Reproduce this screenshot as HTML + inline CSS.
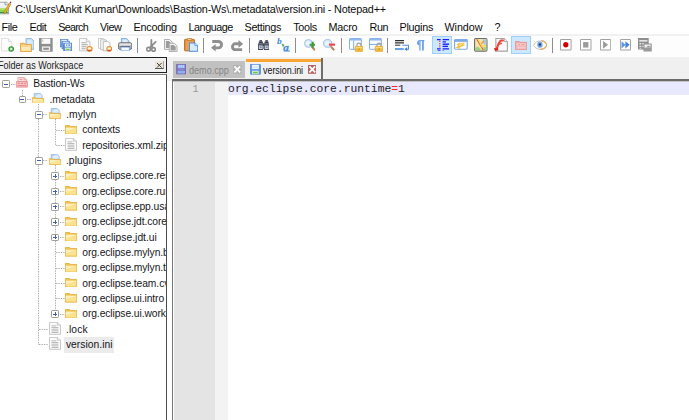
<!DOCTYPE html><html><head><meta charset="utf-8"><title>Notepad++</title><style>
*{margin:0;padding:0;box-sizing:border-box}
html,body{width:689px;height:420px;overflow:hidden;background:#fff}
body{position:relative;font-family:"Liberation Sans",sans-serif;font-size:10.4px;color:#000}
.abs{position:absolute}
.t{position:absolute;white-space:nowrap;line-height:14px;height:14px}
.ui{font-size:10.8px;color:#0c0c0c}
#topgray{left:0;top:34px;width:689px;height:2px;background:#f1f1f1}
#toolbar{left:0;top:36px;width:689px;height:20.5px;background:#fdfdfd}
.sep{position:absolute;top:37.5px;width:1.2px;height:15.2px;background:#8d8d8d}
.hot{position:absolute;top:36.2px;height:17.4px;background:#cce8ff;border:1px solid #9fd0fb}
#below{left:0;top:56.5px;width:689px;height:24px;background:#f0f0f0}
#phead{left:-3px;top:57.1px;width:170.3px;height:15.6px;border:1.4px solid #202020;background:#f0f0f0}
#ptitle{font-size:10.2px;color:#1e1e1e}
#pclose{left:155px;top:60.8px;width:9px;height:8.4px;background:#ece5da;border-right:1px solid #a8a39a;border-bottom:1px solid #5a5a5a}
#tree{left:-2px;top:74.2px;width:169.2px;height:350px;border:1px solid #808080;border-right:1.15px solid #4c4c4c;background:#fff;overflow:hidden}
#treeclip{left:0;top:75px;width:165.6px;height:345px;overflow:hidden}
.row{position:absolute;white-space:nowrap;height:14px;line-height:14px;font-size:10.3px;color:#16161c}
.dv{position:absolute;width:1px;background-image:linear-gradient(#a4a4a4 50%,rgba(255,255,255,0) 50%);background-size:1px 1.7px}
.dh{position:absolute;height:1px;background-image:linear-gradient(90deg,#a4a4a4 50%,rgba(255,255,255,0) 50%);background-size:1.7px 1px}
.exp{position:absolute;width:7.6px;height:7.6px;border:1px solid #9d9d9d;background:#fff;border-radius:1.2px}
.exp i{position:absolute;left:.8px;top:2.3px;width:4px;height:1px;background:#3f5cc0}
.exp b{position:absolute;left:2.3px;top:.8px;width:1px;height:4px;background:#3f5cc0}
#sel{left:64.5px;top:337.2px;width:49.5px;height:15.2px;background:#ececec}
#tab1{left:173.3px;top:60.9px;width:71.6px;height:17px;background:#c1c1c1}
#tab2{left:246.2px;top:59px;width:75.2px;height:20.4px;background:#f1f1f1}
#tab2r{left:321.2px;top:58.2px;width:1.5px;height:21.2px;background:#6e6e6e}
#tab2top{left:246.2px;top:58.9px;width:75px;height:3.1px;background:#faa635}
.tabt{font-size:10.2px}
.cl{position:absolute;width:8.6px;height:8.8px}
#edborder{left:172.3px;top:79.3px;width:517px;height:1.5px;background:#6a6a6a}
#edborder2{left:173.3px;top:80.7px;width:516px;height:.5px;background:#c4c4c4}
#edleft{left:172.3px;top:79.4px;width:1.2px;height:341px;background:#747474}
#lnm{left:173.5px;top:81px;width:41.1px;height:339px;background:#e4e4e4}
#fold{left:214.6px;top:81px;width:13.4px;height:339px;background:#f3f3f3}
#hl{left:228px;top:81.3px;width:461px;height:13.6px;background:#e8e8ff}
.mono{font-family:"Liberation Mono",monospace;font-size:11.33px;line-height:14px}
#ln{color:#9a9a9a;font-size:10px}
#code{color:#1c1c1c}
#code span{color:#ff2020}
</style></head><body>
<svg class="abs" style="left:0.00px;top:0.00px" width="12.00" height="15.00" viewBox="0 0 12 15"><path d="M0 2.200h6.800l1.800 1.800v10h-8.600z" fill="#f4f7fa"/><path d="M0 2.200h6.800l1.800 1.800v10" fill="none" stroke="#7c7c7c" stroke-width=".700"/><path d="M5 2.200v2.800h3.200" fill="#e4e4e4" stroke="#6a6a6a" stroke-width=".600"/><path d="M0 5.400h7.600v2h-7.600z" fill="#e8f0f8"/><path d="M0 7.800h7.800v.600h-7.800z" fill="#ecd9a8"/><path d="M0 8.400h7.800v3.600h-7.800z" fill="#8fd648"/><path d="M0 8.400h7.800v1.400h-7.800z" fill="#b4e478"/><path d="M0 12h7.800v1.300h-7.800z" fill="#2f9a3f"/><path d="M0 13.400h8.600v.900h-8.600z" fill="#9a9a9a"/><path d="M9.300 3.400l1.500.900-5 8.400-2 .900.300-2z" fill="#f5b51e" stroke="#8a5a18" stroke-width=".400"/><path d="M9.500 2.800l.900-1.300 1 .600-.600 1.500z" fill="#8a1a2a"/></svg>
<div class="t ui" id="title" style="left:15.20px;top:1.60px;letter-spacing:-0.178px;">C:\Users\Ankit Kumar\Downloads\Bastion-Ws\.metadata\version.ini - Notepad++</div>
<div class="t ui" id="m0" style="left:1.50px;top:19.60px;letter-spacing:-0.377px;">File</div>
<div class="t ui" id="m1" style="left:29.50px;top:19.60px;letter-spacing:-0.427px;">Edit</div>
<div class="t ui" id="m2" style="left:58.20px;top:19.60px;letter-spacing:-0.753px;">Search</div>
<div class="t ui" id="m3" style="left:100.00px;top:19.60px;letter-spacing:-0.455px;">View</div>
<div class="t ui" id="m4" style="left:133.50px;top:19.60px;letter-spacing:-0.204px;">Encoding</div>
<div class="t ui" id="m5" style="left:188.50px;top:19.60px;letter-spacing:-0.456px;">Language</div>
<div class="t ui" id="m6" style="left:244.50px;top:19.60px;letter-spacing:-0.302px;">Settings</div>
<div class="t ui" id="m7" style="left:293.20px;top:19.60px;letter-spacing:-0.304px;">Tools</div>
<div class="t ui" id="m8" style="left:328.50px;top:19.60px;letter-spacing:-0.220px;">Macro</div>
<div class="t ui" id="m9" style="left:369.50px;top:19.60px;letter-spacing:-0.404px;">Run</div>
<div class="t ui" id="m10" style="left:399.50px;top:19.60px;letter-spacing:-0.260px;">Plugins</div>
<div class="t ui" id="m11" style="left:444.50px;top:19.60px;letter-spacing:-0.084px;">Window</div>
<div class="t ui" id="m12" style="left:494.50px;top:19.60px;letter-spacing:-0.616px;">?</div>
<div class="abs" id="topgray"></div><div class="abs" id="toolbar"></div><div class="abs" id="below"></div>
<div class="hot" style="left:432.2px;width:19.8px"></div><div class="hot" style="left:511px;width:19.7px"></div>
<div class="sep" style="left:136.7px"></div>
<div class="sep" style="left:202.5px"></div>
<div class="sep" style="left:248.8px"></div>
<div class="sep" style="left:294.9px"></div>
<div class="sep" style="left:341.0px"></div>
<div class="sep" style="left:387.3px"></div>
<div class="sep" style="left:551.8px"></div>
<svg class="abs" style="left:1.00px;top:38.20px" width="13.00" height="13.70" viewBox="1.50 1.00 13.90 14.90" preserveAspectRatio="none"><path d="M2 1.500h7.500l3.500 3.500v10h-11z" fill="#fdfdfd" stroke="#dcdcdc"/><path d="M9.500 1.500v3.500h3.500" fill="#f4f4f4" stroke="#dcdcdc"/><circle cx="12.400" cy="12.900" r="3" fill="#2f8f2f"/><circle cx="12.400" cy="12.900" r="2.100" fill="#58b558"/><path d="M11.500 11.300l2.600 1.600-2.600 1.600z" fill="#fff"/></svg>
<svg class="abs" style="left:19.60px;top:38.00px" width="14.40" height="14.00" viewBox="0.30 0.30 16.00 15.70" preserveAspectRatio="none"><path d="M7 .800h6l2.800 2.800v9.400h-8.800z" fill="#c3dcf8" stroke="#8ab6ec"/><path d="M8.500 2.500h4l1.800 1.800v6.500h-5.800z" fill="#dcebfc"/><path d="M.800 6.200h4.500l1.200 1.300h6.500v8h-12.200z" fill="#f6c46a" stroke="#e8a03a"/><path d="M1.700 8.700h10.400v6h-10.400z" fill="#fdeab2"/><path d="M1.700 8.700h10.400v1.600h-10.400z" fill="#fbd88a"/></svg>
<svg class="abs" style="left:39.40px;top:38.20px" width="13.70" height="13.70" viewBox="1.00 1.00 14.00 14.00" preserveAspectRatio="none"><path d="M1 1h14v14h-12.5l-1.5-1.5z" fill="#8e8e8e"/><rect x="3.6" y="1.6" width="9" height="5.4" fill="#fafafa"/><rect x="4.2" y="2.6" width="1.2" height="2.4" fill="#c8c8c8"/><rect x="4" y="9.6" width="8.4" height="4.6" fill="#ededed"/><rect x="5.4" y="11" width="5.6" height="2" fill="#8e8e8e"/></svg>
<svg class="abs" style="left:60.00px;top:39.00px" width="12.20" height="12.20" viewBox="0.60 1.10 14.40 14.50" preserveAspectRatio="none"><rect x="1" y="1.500" width="9" height="9" fill="#7aa6e2" stroke="#5585cc" stroke-width=".800"/><rect x="2.400" y="2.200" width="6.400" height="3" fill="#eef5fd"/><rect x="3" y="3.800" width="9" height="9" fill="#7aa6e2" stroke="#5585cc" stroke-width=".800"/><rect x="4.400" y="4.500" width="6.400" height="3" fill="#eef5fd"/><rect x="5" y="6" width="9.600" height="9.200" fill="#6496dc" stroke="#467ac8" stroke-width=".800"/><rect x="6.400" y="6.600" width="7" height="3.600" fill="#f6faff"/><rect x="8" y="7.400" width="1.200" height="2" fill="#467ac8"/><rect x="10.600" y="7.400" width="1.600" height="2" fill="#467ac8"/><rect x="6.800" y="11.400" width="6.200" height="3.400" fill="#eef9e4"/><rect x="7.800" y="12.600" width="4.200" height="1.600" fill="#7cc64c"/></svg>
<svg class="abs" style="left:79.00px;top:38.20px" width="13.60" height="13.70" viewBox="2.00 1.00 13.70 14.70" preserveAspectRatio="none"><path d="M2.500 1.500h7l3.500 3.500v9.800h-10.500z" fill="#fbfbfb" stroke="#c6c6c6"/><path d="M9.500 1.500v3.500h3.500" fill="#f0f0f0" stroke="#c6c6c6"/><path d="M4.500 6h5M4.500 8.200h6.500M4.500 10.400h5M4.500 12.600h4" stroke="#a8a8a8" stroke-width="1.100"/><circle cx="12.600" cy="12.600" r="3.100" fill="#dd7d2a"/><circle cx="12.600" cy="12.200" r="2.200" fill="#f9cc78"/><rect x="11" y="11.600" width="3.200" height="1.400" rx=".500" fill="#fdf2dc"/><path d="M10.400 14.200a3.100 3.100 0 0 0 4.400 0z" fill="#e03a1e"/></svg>
<svg class="abs" style="left:98.20px;top:38.20px" width="14.00" height="13.70" viewBox="0.50 0.50 15.50 15.20" preserveAspectRatio="none"><path d="M1 1h5.500l2 2v9h-7.500z" fill="#fbfbfb" stroke="#c4c4c4"/><path d="M3.500 2.500h5.500l2 2v9h-7.500z" fill="#fbfbfb" stroke="#bcbcbc"/><path d="M6.300 4.200h5l2.500 2.500v8.100h-7.500z" fill="#fcfcfc" stroke="#b4b4b4"/><circle cx="12.900" cy="12.600" r="3.100" fill="#dd7d2a"/><circle cx="12.900" cy="12.200" r="2.200" fill="#f9cc78"/><rect x="11.300" y="11.600" width="3.200" height="1.400" rx=".500" fill="#fdf2dc"/><path d="M10.700 14.200a3.100 3.100 0 0 0 4.400 0z" fill="#e03a1e"/></svg>
<svg class="abs" style="left:118.00px;top:38.20px" width="14.30" height="13.20" viewBox="0.30 0.50 15.60 14.90" preserveAspectRatio="none"><path d="M4 1h5.600l2.600 2.600v3.400h-8.200z" fill="#b9d6f7" stroke="#74aaea"/><path d="M5.400 2.400h3.800l1.600 1.600v2.600h-5.400z" fill="#e2eefc"/><rect x=".800" y="5.800" width="14.600" height="7.600" rx="1.800" fill="#b2b2b2" stroke="#6c6c6c"/><rect x="1.600" y="6.600" width="13" height="2.400" rx="1.200" fill="#e4e4e4"/><rect x="1.600" y="10.800" width="13" height="1.800" fill="#9c9c9c"/><rect x="3" y="9.600" width="10.200" height="1.200" fill="#5e5e5e"/><rect x="3.600" y="10.800" width="9" height="4.200" fill="#f4f8ff" stroke="#6fa5e8" stroke-width=".800"/></svg>
<svg class="abs" style="left:146.20px;top:38.60px" width="10.50" height="13.00" viewBox="1.70 0.10 13.00 15.90" preserveAspectRatio="none"><path d="M8.400 1.200l-.200 8M13.600 3.600l-6.400 6.400" stroke="#8c8c8c" stroke-width="2.200" fill="none" stroke-linecap="round"/><circle cx="4.900" cy="12.600" r="2.200" fill="none" stroke="#8c8c8c" stroke-width="2"/><circle cx="11" cy="12.800" r="2.200" fill="none" stroke="#8c8c8c" stroke-width="2"/><path d="M6.300 11l2.600-2.400 1.300 2.800" stroke="#8c8c8c" stroke-width="2" fill="none"/></svg>
<svg class="abs" style="left:164.40px;top:38.80px" width="13.50" height="13.10" viewBox="0.45 0.65 15.60 14.90" preserveAspectRatio="none"><path d="M1 1.2h6l3 3v8.3h-9z" fill="#f6f6f6" stroke="#a9a9a9" stroke-width="1.1"/><path d="M2.6 3h3.6l2.2 2.2v5.6h-5.8z" fill="#9b9b9b"/><path d="M6.5 5.6h6l3 3v6.4h-9z" fill="#f6f6f6" stroke="#a9a9a9" stroke-width="1.1"/><path d="M8 7.4h3.8l2.2 2.2v4h-6z" fill="#9b9b9b"/></svg>
<svg class="abs" style="left:184.00px;top:38.20px" width="14.20" height="13.70" viewBox="0.50 0.45 15.55 15.50" preserveAspectRatio="none"><rect x="1" y="2" width="11" height="13" rx="1" fill="#d98a3a" stroke="#b86a20"/><rect x="2.4" y="3.4" width="8.2" height="10.4" fill="#e9a254"/><rect x="4" y=".8" width="5" height="2.6" rx=".8" fill="#f3c98a" stroke="#b86a20" stroke-width=".7"/><path d="M6.5 6h6l3 3v6.4h-9z" fill="#d9eafd" stroke="#4f8fe0" stroke-width="1.1"/><path d="M12.5 6v3h3" fill="#eef6ff" stroke="#4f8fe0" stroke-width=".9"/></svg>
<svg class="abs" style="left:211.30px;top:40.30px" width="12.00" height="11.60" viewBox="0.80 2.10 15.60 14.90" preserveAspectRatio="none"><path d="M2.400 4h8a4.100 4.100 0 0 1 0 8.200h-4.400" fill="none" stroke="#8f8f8f" stroke-width="3.800"/><path d="M.800 12.200l6-4.800v9.600z" fill="#8f8f8f"/></svg>
<svg class="abs" style="left:231.10px;top:39.70px" width="12.10" height="11.30" viewBox="-0.10 1.40 15.90 14.10" preserveAspectRatio="none"><path d="M13 6.200h-7.500a3.700 3.700 0 0 0 0 7.400h9" fill="none" stroke="#8f8f8f" stroke-width="3.800"/><path d="M15.800 6.200l-6-4.800v9.600z" fill="#8f8f8f"/></svg>
<svg class="abs" style="left:257.80px;top:40.30px" width="11.40" height="10.20" viewBox="1.20 2.40 13.60 12.00" preserveAspectRatio="none"><path d="M3 2.400h3v2h-3zM10 2.400h3v2h-3z" fill="#50556a"/><path d="M2.200 4.200h4.800v2.400h-4.800zM9 4.200h4.800v2.400h-4.800z" fill="#3c404d"/><path d="M1.200 6.400h6.600v8h-6.600zM8.200 6.400h6.600v8h-6.600z" fill="#444857"/><rect x="6.800" y="6.400" width="2.400" height="3" fill="#3c404d"/><rect x="2.200" y="8.800" width="4.600" height="4.200" fill="#c2ccdc"/><rect x="9.200" y="8.800" width="4.600" height="4.200" fill="#c2ccdc"/><rect x="3.400" y="10" width="2.200" height="1.800" fill="#7a869c"/><rect x="10.400" y="10" width="2.200" height="1.800" fill="#7a869c"/><path d="M1.200 6.400h6.600v1.400h-6.600zM8.200 6.400h6.600v1.400h-6.600z" fill="#6a7084"/></svg>
<svg class="abs" style="left:276.60px;top:38.40px" width="13.90" height="13.50" viewBox="0.10 0.30 15.50 15.40" preserveAspectRatio="none"><text x="0" y="7.600" font-family="Liberation Serif,serif" font-weight="bold" font-style="italic" font-size="10.500" fill="#3d8ae6">b</text><text x="7" y="15.400" font-family="Liberation Serif,serif" font-weight="bold" font-style="italic" font-size="12.500" fill="#3d8ae6" stroke="#3d8ae6" stroke-width=".300">a</text><path d="M5 6.600l3.400 1.400-1.400 3z" fill="#4cab3c"/><path d="M7.400 14.600h8.200v1h-8.200z" fill="#5a9cea"/></svg>
<svg class="abs" style="left:303.70px;top:39.00px" width="11.80" height="11.60" viewBox="-0.25 0.15 16.05 15.85" preserveAspectRatio="none"><circle cx="5.800" cy="6.200" r="5.400" fill="#d6e6f9" stroke="#a2c2ea" stroke-width="1.300"/><circle cx="5.400" cy="5.800" r="3" fill="#ecf4fd"/><path d="M10.800 11.200l3 3.400" stroke="#b88452" stroke-width="2.800" stroke-linecap="round"/><path d="M7.400 6.600h2.800v-2.800h2.800v2.800h2.800v2.800h-2.800v2.800h-2.800v-2.800h-2.800z" fill="#3f9a3a"/></svg>
<svg class="abs" style="left:322.90px;top:39.00px" width="12.30" height="11.60" viewBox="-0.25 0.15 16.25 15.85" preserveAspectRatio="none"><circle cx="5.800" cy="6.200" r="5.400" fill="#d6e6f9" stroke="#a2c2ea" stroke-width="1.300"/><circle cx="5.400" cy="5.800" r="3" fill="#ecf4fd"/><path d="M10.800 11.200l3 3.400" stroke="#b88452" stroke-width="2.800" stroke-linecap="round"/><rect x="7.600" y="6.200" width="8.400" height="3.200" rx=".600" fill="#ee4a4a"/></svg>
<svg class="abs" style="left:349.00px;top:38.40px" width="14.00" height="13.70" viewBox="0.25 0.45 16.10 15.70" preserveAspectRatio="none"><rect x=".800" y="1" width="13.600" height="12.400" rx="1" fill="#fdfeff" stroke="#79a8e8" stroke-width="1.100"/><rect x=".800" y="1" width="13.600" height="2.400" fill="#8fb8ef"/><path d="M5.600 3.400v9.800" stroke="#79a8e8" stroke-width="1.100"/><path d="M9.400 10.400v-1.600a2.300 2.300 0 0 1 4.600 0v1.600" fill="none" stroke="#a8a8a8" stroke-width="1.500"/><rect x="7.400" y="10" width="8.600" height="5.800" rx=".600" fill="#f1bb3c" stroke="#dfa024" stroke-width=".700"/><rect x="8.200" y="10.700" width="7" height="1.500" fill="#f9d97c"/><rect x="11.200" y="12.400" width="1.200" height="2" fill="#c88a1a"/></svg>
<svg class="abs" style="left:368.90px;top:38.40px" width="14.00" height="13.70" viewBox="0.25 0.45 16.10 15.70" preserveAspectRatio="none"><rect x=".800" y="1" width="13.600" height="12.400" rx="1" fill="#fdfeff" stroke="#79a8e8" stroke-width="1.100"/><rect x=".800" y="1" width="13.600" height="2.400" fill="#8fb8ef"/><path d="M1 7.800h13.200" stroke="#79a8e8" stroke-width="1.100"/><path d="M9.400 10.400v-1.600a2.300 2.300 0 0 1 4.600 0v1.600" fill="none" stroke="#a8a8a8" stroke-width="1.500"/><rect x="7.400" y="10" width="8.600" height="5.800" rx=".600" fill="#f1bb3c" stroke="#dfa024" stroke-width=".700"/><rect x="8.200" y="10.700" width="7" height="1.500" fill="#f9d97c"/><rect x="11.200" y="12.400" width="1.200" height="2" fill="#c88a1a"/></svg>
<svg class="abs" style="left:395.00px;top:39.90px" width="14.30" height="11.10" viewBox="0.60 2.20 15.30 14.00" preserveAspectRatio="none"><path d="M.6 3h9.6M.6 5.8h9.6" stroke="#2e2e2e" stroke-width="1.6"/><path d="M.6 8.8h5.6" stroke="#5a5a5a" stroke-width="1.6"/><path d="M8.6 8.8h6.6v5h-2.4" fill="none" stroke="#4a8ee6" stroke-width="1.4"/><path d="M13.6 11.4l-3 2.4 3 2.4z" fill="#3a7ad6"/><path d="M.6 13.6h9.4" stroke="#6aa2ec" stroke-width="2.6"/></svg>
<svg class="abs" style="left:417.20px;top:40.00px" width="7.40" height="10.50" viewBox="3.80 0.85 9.20 14.35" preserveAspectRatio="none"><path d="M5.600 1.600h7.400" stroke="#6aa2ec" stroke-width="1.500"/><path d="M7.200 1.600a3.400 3.400 0 0 0 0 6.800z" fill="#6aa2ec"/><path d="M7.400 1.600v13.600" stroke="#86b4f2" stroke-width="2"/><path d="M11.200 1.600v13.600" stroke="#5a94e6" stroke-width="2"/></svg>
<svg class="abs" style="left:436.70px;top:39.00px" width="12.60" height="12.40" viewBox="1.00 0.85 15.20 15.20" preserveAspectRatio="none"><path d="M1 1.6h4.4M7.8 1.6h8" stroke="#1a1aff" stroke-width="1.5"/><path d="M7.8 4.4h4" stroke="#1a1aff" stroke-width="1.5"/><path d="M7.8 7.2h8.4" stroke="#1a1aff" stroke-width="1.7"/><path d="M7.8 9.9h6.4" stroke="#1a1aff" stroke-width="1.7"/><path d="M1 13h4.4M7.8 13h8" stroke="#1a1aff" stroke-width="1.5"/><path d="M1.8 15.4h3.4M7.8 15.4h1.2" stroke="#2a2aee" stroke-width="1.3"/><path d="M4.4 3v9" stroke="#e82020" stroke-width="1.3" stroke-dasharray="1.6 1.2"/></svg>
<svg class="abs" style="left:454.10px;top:39.20px" width="13.80" height="11.30" viewBox="0.15 0.55 15.90 14.65" preserveAspectRatio="none"><rect x=".800" y="1.200" width="14.600" height="12.600" rx="1.200" fill="#fdfeff" stroke="#7ea8e6" stroke-width="1.300"/><rect x=".800" y="1.200" width="14.600" height="3" fill="#7ea8e6"/><path d="M5.600 5.600l7.400-.400-2.200 2.600 2.800.400-6 2.600-2.200 4.400-.600-3.200-3.600.600 3.800-3.400-1.800-1.400z" fill="#f2c040"/><path d="M6.600 6.400l4.400-.200-2 2.200-3.400 2.200z" fill="#f9dc86"/></svg>
<svg class="abs" style="left:474.20px;top:38.20px" width="13.50" height="13.70" viewBox="0.15 0.15 15.90 15.90" preserveAspectRatio="none"><rect x=".800" y=".800" width="14.600" height="14.600" rx="1.400" fill="#f3e3a4" stroke="#6d6d6d" stroke-width="1.300"/><path d="M10 1.600h4.800v5.800l-2.800 1z" fill="#a6cbe8"/><path d="M1.600 11.400l3.400-1.200 2.600 2.400.800 2.200h-6.800z" fill="#9ad284"/><path d="M11.400 10.400l3.400 1v3.400h-3.600z" fill="#9ad284"/><path d="M3.400 1.600l4 6.400 3.600 6" fill="none" stroke="#e8553a" stroke-width="1.400"/><path d="M7.600 8.200l4.400-4.800" fill="none" stroke="#ee8a3a" stroke-width="1.200"/><path d="M5 1.600l4.600 8.800 4.600-2" fill="none" stroke="#f9dc5a" stroke-width="1.300"/></svg>
<svg class="abs" style="left:493.70px;top:38.20px" width="13.90" height="13.70" viewBox="0.40 0.60 15.00 15.20" preserveAspectRatio="none"><path d="M2.400 1.200h9l3.400 3.400v10.600h-12.400z" fill="#fdfdfd" stroke="#a4a4a4" stroke-width="1.200"/><path d="M11.400 1.200v3.400h3.400" fill="#f1f1f1" stroke="#a4a4a4"/><path d="M10 3.400c-2-.600-3.200.400-4 2.400l-2.800 6.800" fill="none" stroke="#f04a44" stroke-width="2.400" stroke-linecap="round"/><path d="M.400 12l4-.800.800 2.800-3.600 1.200z" fill="#e8281e"/><path d="M4 7.800l5-1.200" stroke="#f04a44" stroke-width="1.600"/></svg>
<svg class="abs" style="left:515.00px;top:41.00px" width="12.20" height="9.10" viewBox="0.50 3.10 15.20 12.20" preserveAspectRatio="none"><path d="M1 3.600h4.600l1.200 1.300h8.400v9.900h-14.200z" fill="#f2a8a8" stroke="#e88c8c" stroke-width="1"/><path d="M2.400 6.400h11.400v2.600h-11.400z" fill="#fadcdc"/><path d="M2.400 10.400h11.400v3h-11.400z" fill="#f7caca"/><path d="M4 7h3v1.400h-3zM8.400 7h4.200v1.400h-4.200z" fill="#f0a2a2"/></svg>
<svg class="abs" style="left:532.90px;top:40.00px" width="14.50" height="10.00" viewBox="0.05 3.40 16.20 9.45" preserveAspectRatio="none"><path d="M.600 8.400c3-5.200 11.600-5.800 15 0-3.400 5-12 5-15 0z" fill="#fdfdfd" stroke="#bdbdbd" stroke-width=".900"/><path d="M9.400 4c3 .200 5.200 1.800 6.200 4.400-1.400 2.600-4.400 4-7.600 3.800" fill="none" stroke="#e9a860" stroke-width="1.200"/><circle cx="7.800" cy="7.800" r="3" fill="#84aee2"/><circle cx="7.800" cy="7.800" r="1.900" fill="#5a88c8"/><circle cx="7.800" cy="7.600" r=".900" fill="#222840"/></svg>
<svg class="abs" style="left:560.20px;top:39.00px" width="11.60" height="11.50" viewBox="0.55 1.15 14.90 14.30" preserveAspectRatio="none"><rect x="1.200" y="1.800" width="13.600" height="13" rx=".8" fill="#fff" stroke="#a2a2a2" stroke-width="1.300"/><circle cx="8" cy="8.400" r="3.400" fill="#d40000"/></svg>
<svg class="abs" style="left:580.10px;top:39.00px" width="11.50" height="11.50" viewBox="0.55 1.15 14.90 14.30" preserveAspectRatio="none"><rect x="1.200" y="1.800" width="13.600" height="13" rx=".8" fill="#fff" stroke="#a2a2a2" stroke-width="1.300"/><rect x="4.600" y="5" width="6.800" height="6.800" fill="#9b9b9b"/></svg>
<svg class="abs" style="left:599.70px;top:39.00px" width="11.20" height="11.50" viewBox="0.55 1.15 14.90 14.30" preserveAspectRatio="none"><rect x="1.200" y="1.800" width="13.600" height="13" rx=".8" fill="#fff" stroke="#a2a2a2" stroke-width="1.300"/><path d="M4.600 3.600l6.800 4.800-6.800 4.800z" fill="#9b9b9b"/></svg>
<svg class="abs" style="left:619.90px;top:39.00px" width="11.00" height="11.50" viewBox="0.55 1.15 14.90 14.30" preserveAspectRatio="none"><rect x="1.200" y="1.800" width="13.600" height="13" rx=".8" fill="#fff" stroke="#a2a2a2" stroke-width="1.300"/><path d="M2.600 3.800l5.600 4.600-5.600 4.600z" fill="#5e98ea"/><path d="M7.800 3.800l5.800 4.600-5.800 4.600z" fill="#3f82e0"/></svg>
<svg class="abs" style="left:638.30px;top:38.40px" width="13.80" height="13.50" viewBox="0.60 0.60 15.20 15.20" preserveAspectRatio="none"><rect x=".6" y=".6" width="11.800" height="13" fill="#8e8e8e"/><rect x="2" y="3" width="9" height="1.600" fill="#f2f2f2"/><path d="M2.200 6.200h2v1.800h-2zM5.400 6.200h2v1.800h-2zM2.200 9.200h2v1.800h-2zM5.400 9.200h2v1.800h-2zM2.200 12h2v1.200h-2z" fill="#e4e4e4"/><rect x="6.600" y="6.800" width="9.200" height="9" fill="#9a9a9a"/><rect x="7.800" y="8" width="6.800" height="3.400" fill="#f0f0f0"/><path d="M9.400 11.400l2.400-2.400 1.600 1.200 1.200-.8v2z" fill="#9a9a9a"/></svg>
<div class="abs" id="phead"></div>
<div class="t" id="ptitle" style="left:-1.80px;top:59.00px;transform:scaleX(0.8868);transform-origin:0 0;">Folder as Workspace</div>
<div class="abs" id="pclose"></div>
<svg class="abs" style="left:156.20px;top:61.50px" width="6.60" height="6.60" viewBox="0 0 6.600 6.600"><path d="M1 1l4.600 4.600M5.600 1l-4.600 4.600" stroke="#3a3a3a" stroke-width="1"/></svg>
<div class="abs" id="tree"></div><div class="abs" id="treeclip">
<div class="abs" style="left:63.9px;top:262.2px;width:50.2px;height:15.5px;background:#ebebeb"></div>
<div class="dv" style="left:21.95px;top:14.70px;height:5.83px"></div>
<div class="dv" style="left:38.30px;top:29.03px;height:240.78px"></div>
<div class="dv" style="left:54.65px;top:44.36px;height:26.16px"></div>
<div class="dv" style="left:54.65px;top:90.35px;height:144.80px"></div>
<div class="dh" style="left:10.60px;top:8.70px;width:5.00px"></div>
<div class="exp" style="left:2.30px;top:5.40px"><i></i></div>
<svg class="abs" style="left:16.00px;top:2.20px" width="11.80" height="10.50" viewBox="0.55 0.35 14.90 14.70" preserveAspectRatio="none"><path d="M3 .8h7.600l3.400 3.400v3h-11z" fill="#fbe4e4" stroke="#e58a8a" stroke-width=".9"/><path d="M10.600.8v3.400h3.400" fill="#f7d0d0" stroke="#e58a8a" stroke-width=".8"/><path d="M5 3h3.400v1.600h-3.400z" fill="#e99a9a"/><path d="M1 6.600h14v8h-14z" fill="#f6c4c4" stroke="#e27f7f" stroke-width=".9"/><path d="M2.600 8.400h3v1.600h-3zM6.800 8.400h3v1.600h-3zM11 8.400h2.600v1.600h-2.600zM2.600 11.400h11v1.800h-11z" fill="#e68c8c"/></svg>
<div class="row" id="r0" style="left:33.20px;top:2.30px;letter-spacing:-0.126px;">Bastion-Ws</div>
<div class="dh" style="left:26.95px;top:24.03px;width:5.00px"></div>
<div class="exp" style="left:18.65px;top:20.73px"><i></i></div>
<svg class="abs" style="left:32.35px;top:17.53px" width="12.00" height="10.80" viewBox="0.75 0.35 14.70 14.70" preserveAspectRatio="none"><path d="M3.400.800h7l2.800 2.800v5h-9.800z" fill="#b9d6f6" stroke="#86b4ea" stroke-width=".900"/><path d="M4.600 6.400c.600-3 3-4.600 6.200-4.400l1.600 1.800v2.600z" fill="#e4effc"/><path d="M1.200 6.600h3.600l1 1.200h9.200v6.800h-13.800z" fill="#f4c85c" stroke="#e6ac3c" stroke-width=".900"/><path d="M1.800 8.800h12.600v5.200h-12.600z" fill="#fce596"/><path d="M1.800 8.800h12.600l-12.600 2.800z" fill="#fdf2c8"/></svg>
<div class="row" id="r1" style="left:49.55px;top:17.63px;letter-spacing:-0.066px;">.metadata</div>
<div class="dh" style="left:43.30px;top:39.36px;width:5.00px"></div>
<div class="exp" style="left:35.00px;top:36.06px"><i></i></div>
<svg class="abs" style="left:48.70px;top:32.86px" width="12.00" height="10.80" viewBox="0.75 0.35 14.70 14.70" preserveAspectRatio="none"><path d="M3.400.800h7l2.800 2.800v5h-9.800z" fill="#b9d6f6" stroke="#86b4ea" stroke-width=".900"/><path d="M4.600 6.400c.600-3 3-4.600 6.200-4.400l1.600 1.800v2.600z" fill="#e4effc"/><path d="M1.200 6.600h3.600l1 1.200h9.200v6.800h-13.800z" fill="#f4c85c" stroke="#e6ac3c" stroke-width=".900"/><path d="M1.800 8.800h12.600v5.200h-12.600z" fill="#fce596"/><path d="M1.800 8.800h12.600l-12.600 2.800z" fill="#fdf2c8"/></svg>
<div class="row" id="r2" style="left:65.90px;top:32.96px;letter-spacing:0.192px;">.mylyn</div>
<div class="dh" style="left:55.65px;top:54.69px;width:9.00px"></div>
<svg class="abs" style="left:65.15px;top:49.59px" width="12.20" height="9.50" viewBox="0.75 2.15 14.50 11.70" preserveAspectRatio="none"><path d="M1.200 2.600h5l1 1.400h7.600v9.400h-13.600z" fill="#f2c14e" stroke="#e2a93a" stroke-width=".9"/><path d="M1.800 5.600h12.400v7.200h-12.400z" fill="#fbe28f"/><path d="M1.800 5.600h12.400l-12.400 4.200z" fill="#fdf0c0"/></svg>
<div class="row" id="r3" style="left:82.25px;top:48.29px;letter-spacing:-0.057px;">contexts</div>
<div class="dh" style="left:55.65px;top:70.02px;width:9.00px"></div>
<svg class="abs" style="left:65.25px;top:63.02px" width="12.00" height="12.70" viewBox="1.75 0.35 12.50 15.30" preserveAspectRatio="none"><path d="M2.200.8h8.200l3.400 3.400v11h-11.600z" fill="#fbfbfb" stroke="#b8b8b8" stroke-width=".9"/><path d="M10.400.8v3.400h3.400" fill="#eee" stroke="#b8b8b8" stroke-width=".8"/><path d="M4.400 5h5M4.400 7h7.200M4.400 9h7.200M4.400 11h7.200M4.400 13h7.200" stroke="#a9a9a9" stroke-width=".9"/></svg>
<div class="row" id="r4" style="left:82.25px;top:63.62px;letter-spacing:-0.09px;">repositories.xml.zip</div>
<div class="dh" style="left:43.30px;top:85.35px;width:5.00px"></div>
<div class="exp" style="left:35.00px;top:82.05px"><i></i></div>
<svg class="abs" style="left:48.70px;top:78.85px" width="12.00" height="10.80" viewBox="0.75 0.35 14.70 14.70" preserveAspectRatio="none"><path d="M3.400.800h7l2.800 2.800v5h-9.800z" fill="#b9d6f6" stroke="#86b4ea" stroke-width=".900"/><path d="M4.600 6.400c.600-3 3-4.600 6.200-4.400l1.600 1.800v2.600z" fill="#e4effc"/><path d="M1.200 6.600h3.600l1 1.200h9.200v6.800h-13.800z" fill="#f4c85c" stroke="#e6ac3c" stroke-width=".900"/><path d="M1.800 8.800h12.600v5.200h-12.600z" fill="#fce596"/><path d="M1.800 8.800h12.600l-12.600 2.800z" fill="#fdf2c8"/></svg>
<div class="row" id="r5" style="left:65.90px;top:78.95px;letter-spacing:0.081px;">.plugins</div>
<div class="dh" style="left:59.65px;top:100.68px;width:5.00px"></div>
<div class="exp" style="left:51.35px;top:97.38px"><i></i><b></b></div>
<svg class="abs" style="left:65.15px;top:95.58px" width="12.20" height="9.50" viewBox="0.75 2.15 14.50 11.70" preserveAspectRatio="none"><path d="M1.200 2.600h5l1 1.400h7.600v9.400h-13.600z" fill="#f2c14e" stroke="#e2a93a" stroke-width=".9"/><path d="M1.800 5.600h12.400v7.200h-12.400z" fill="#fbe28f"/><path d="M1.800 5.600h12.400l-12.400 4.200z" fill="#fdf0c0"/></svg>
<div class="row" id="r6" style="left:82.25px;top:94.28px;letter-spacing:-0.09px;">org.eclipse.core.resources</div>
<div class="dh" style="left:59.65px;top:116.01px;width:5.00px"></div>
<div class="exp" style="left:51.35px;top:112.71px"><i></i><b></b></div>
<svg class="abs" style="left:65.15px;top:110.91px" width="12.20" height="9.50" viewBox="0.75 2.15 14.50 11.70" preserveAspectRatio="none"><path d="M1.200 2.600h5l1 1.400h7.600v9.400h-13.600z" fill="#f2c14e" stroke="#e2a93a" stroke-width=".9"/><path d="M1.800 5.600h12.400v7.200h-12.400z" fill="#fbe28f"/><path d="M1.800 5.600h12.400l-12.400 4.200z" fill="#fdf0c0"/></svg>
<div class="row" id="r7" style="left:82.25px;top:109.61px;letter-spacing:-0.09px;">org.eclipse.core.runtime</div>
<div class="dh" style="left:59.65px;top:131.34px;width:5.00px"></div>
<div class="exp" style="left:51.35px;top:128.04px"><i></i><b></b></div>
<svg class="abs" style="left:65.15px;top:126.24px" width="12.20" height="9.50" viewBox="0.75 2.15 14.50 11.70" preserveAspectRatio="none"><path d="M1.200 2.600h5l1 1.400h7.600v9.400h-13.600z" fill="#f2c14e" stroke="#e2a93a" stroke-width=".9"/><path d="M1.800 5.600h12.400v7.200h-12.400z" fill="#fbe28f"/><path d="M1.800 5.600h12.400l-12.400 4.200z" fill="#fdf0c0"/></svg>
<div class="row" id="r8" style="left:82.25px;top:124.94px;letter-spacing:-0.09px;">org.eclipse.epp.usagedata</div>
<div class="dh" style="left:59.65px;top:146.67px;width:5.00px"></div>
<div class="exp" style="left:51.35px;top:143.37px"><i></i><b></b></div>
<svg class="abs" style="left:65.15px;top:141.57px" width="12.20" height="9.50" viewBox="0.75 2.15 14.50 11.70" preserveAspectRatio="none"><path d="M1.200 2.600h5l1 1.400h7.600v9.400h-13.600z" fill="#f2c14e" stroke="#e2a93a" stroke-width=".9"/><path d="M1.800 5.600h12.400v7.200h-12.400z" fill="#fbe28f"/><path d="M1.800 5.600h12.400l-12.400 4.200z" fill="#fdf0c0"/></svg>
<div class="row" id="r9" style="left:82.25px;top:140.27px;letter-spacing:-0.09px;">org.eclipse.jdt.core</div>
<div class="dh" style="left:59.65px;top:162.00px;width:5.00px"></div>
<div class="exp" style="left:51.35px;top:158.70px"><i></i><b></b></div>
<svg class="abs" style="left:65.15px;top:156.90px" width="12.20" height="9.50" viewBox="0.75 2.15 14.50 11.70" preserveAspectRatio="none"><path d="M1.200 2.600h5l1 1.400h7.600v9.400h-13.600z" fill="#f2c14e" stroke="#e2a93a" stroke-width=".9"/><path d="M1.800 5.600h12.400v7.200h-12.400z" fill="#fbe28f"/><path d="M1.800 5.600h12.400l-12.400 4.200z" fill="#fdf0c0"/></svg>
<div class="row" id="r10" style="left:82.25px;top:155.60px;letter-spacing:0.014px;">org.eclipse.jdt.ui</div>
<div class="dh" style="left:55.65px;top:177.33px;width:9.00px"></div>
<svg class="abs" style="left:65.15px;top:172.23px" width="12.20" height="9.50" viewBox="0.75 2.15 14.50 11.70" preserveAspectRatio="none"><path d="M1.200 2.600h5l1 1.400h7.600v9.400h-13.600z" fill="#f2c14e" stroke="#e2a93a" stroke-width=".9"/><path d="M1.800 5.600h12.400v7.200h-12.400z" fill="#fbe28f"/><path d="M1.800 5.600h12.400l-12.400 4.200z" fill="#fdf0c0"/></svg>
<div class="row" id="r11" style="left:82.25px;top:170.93px;letter-spacing:-0.09px;">org.eclipse.mylyn.bugzilla</div>
<div class="dh" style="left:55.65px;top:192.66px;width:9.00px"></div>
<svg class="abs" style="left:65.15px;top:187.56px" width="12.20" height="9.50" viewBox="0.75 2.15 14.50 11.70" preserveAspectRatio="none"><path d="M1.200 2.600h5l1 1.400h7.600v9.400h-13.600z" fill="#f2c14e" stroke="#e2a93a" stroke-width=".9"/><path d="M1.800 5.600h12.400v7.200h-12.400z" fill="#fbe28f"/><path d="M1.800 5.600h12.400l-12.400 4.200z" fill="#fdf0c0"/></svg>
<div class="row" id="r12" style="left:82.25px;top:186.26px;letter-spacing:-0.09px;">org.eclipse.mylyn.tasks</div>
<div class="dh" style="left:55.65px;top:207.99px;width:9.00px"></div>
<svg class="abs" style="left:65.15px;top:202.89px" width="12.20" height="9.50" viewBox="0.75 2.15 14.50 11.70" preserveAspectRatio="none"><path d="M1.200 2.600h5l1 1.400h7.600v9.400h-13.600z" fill="#f2c14e" stroke="#e2a93a" stroke-width=".9"/><path d="M1.800 5.600h12.400v7.200h-12.400z" fill="#fbe28f"/><path d="M1.800 5.600h12.400l-12.400 4.200z" fill="#fdf0c0"/></svg>
<div class="row" id="r13" style="left:82.25px;top:201.59px;letter-spacing:-0.09px;">org.eclipse.team.cvs</div>
<div class="dh" style="left:55.65px;top:223.32px;width:9.00px"></div>
<svg class="abs" style="left:65.15px;top:218.22px" width="12.20" height="9.50" viewBox="0.75 2.15 14.50 11.70" preserveAspectRatio="none"><path d="M1.200 2.600h5l1 1.400h7.600v9.400h-13.600z" fill="#f2c14e" stroke="#e2a93a" stroke-width=".9"/><path d="M1.800 5.600h12.400v7.200h-12.400z" fill="#fbe28f"/><path d="M1.800 5.600h12.400l-12.400 4.200z" fill="#fdf0c0"/></svg>
<div class="row" id="r14" style="left:82.25px;top:216.92px;letter-spacing:-0.09px;">org.eclipse.ui.intro</div>
<div class="dh" style="left:59.65px;top:238.65px;width:5.00px"></div>
<div class="exp" style="left:51.35px;top:235.35px"><i></i><b></b></div>
<svg class="abs" style="left:65.15px;top:233.55px" width="12.20" height="9.50" viewBox="0.75 2.15 14.50 11.70" preserveAspectRatio="none"><path d="M1.200 2.600h5l1 1.400h7.600v9.400h-13.600z" fill="#f2c14e" stroke="#e2a93a" stroke-width=".9"/><path d="M1.800 5.600h12.400v7.200h-12.400z" fill="#fbe28f"/><path d="M1.800 5.600h12.400l-12.400 4.200z" fill="#fdf0c0"/></svg>
<div class="row" id="r15" style="left:82.25px;top:232.25px;letter-spacing:-0.09px;">org.eclipse.ui.workbench</div>
<div class="dh" style="left:39.30px;top:253.98px;width:9.00px"></div>
<svg class="abs" style="left:48.90px;top:246.98px" width="12.00" height="12.70" viewBox="1.75 0.35 12.50 15.30" preserveAspectRatio="none"><path d="M2.200.8h8.200l3.400 3.400v11h-11.600z" fill="#fbfbfb" stroke="#b8b8b8" stroke-width=".9"/><path d="M10.400.8v3.400h3.400" fill="#eee" stroke="#b8b8b8" stroke-width=".8"/><path d="M4.400 5h5M4.400 7h7.200M4.400 9h7.200M4.400 11h7.200M4.400 13h7.200" stroke="#a9a9a9" stroke-width=".9"/></svg>
<div class="row" id="r16" style="left:65.90px;top:247.58px;letter-spacing:0.142px;">.lock</div>
<div class="dh" style="left:39.30px;top:269.31px;width:9.00px"></div>
<svg class="abs" style="left:48.90px;top:262.31px" width="12.00" height="12.70" viewBox="1.75 0.35 12.50 15.30" preserveAspectRatio="none"><path d="M2.200.8h8.200l3.400 3.400v11h-11.600z" fill="#fbfbfb" stroke="#b8b8b8" stroke-width=".9"/><path d="M10.400.8v3.400h3.400" fill="#eee" stroke="#b8b8b8" stroke-width=".8"/><path d="M4.400 5h5M4.400 7h7.200M4.400 9h7.200M4.400 11h7.200M4.400 13h7.200" stroke="#a9a9a9" stroke-width=".9"/></svg>
<div class="row" id="r17" style="left:65.90px;top:262.91px;letter-spacing:0.026px;">version.ini</div>
</div>
<div class="abs" id="tab1"></div><div class="abs" id="tab2"></div><div class="abs" id="tab2top"></div><div class="abs" id="tab2r"></div>
<svg class="abs" style="left:175.80px;top:64.40px" width="10.50" height="10.30" viewBox="0.30 0.30 15.40 15.40" preserveAspectRatio="none"><rect x=".800" y=".800" width="14.400" height="14.400" rx="1" fill="#7c6cbc" stroke="#7660b0" stroke-width="1"/><rect x="2.800" y="1.600" width="10.400" height="5" fill="#8db6f2"/><rect x="4.200" y="2.200" width="1.600" height="3.400" fill="#c4dcfa"/><rect x="7.200" y="2.200" width="1.600" height="3.400" fill="#c4dcfa"/><rect x="10.200" y="2.200" width="1.600" height="3.400" fill="#c4dcfa"/><path d="M3 9l3.400-1.600 3 1.600 3.400-1.600" fill="none" stroke="#9aa6e6" stroke-width="1"/><rect x="2.800" y="10.400" width="10.400" height="4" fill="#98c0f4"/><rect x="3.800" y="11.400" width="8.400" height="1.600" fill="#7aa8ee"/></svg>
<svg class="abs" style="left:249.90px;top:64.10px" width="10.80" height="10.70" viewBox="0.30 0.30 15.40 15.40" preserveAspectRatio="none"><rect x=".8" y=".8" width="14.400" height="14.400" rx="1" fill="#5b9be8" stroke="#3f7fd2" stroke-width="1"/><rect x="3" y="1.400" width="10" height="6.200" fill="#f4f8fd"/><rect x="3" y="2.800" width="10" height="1" fill="#cfe0f6"/><rect x="3" y="5" width="10" height="1" fill="#cfe0f6"/><rect x="3.400" y="10" width="9.200" height="5" fill="#e6f3dc"/><rect x="4.600" y="11.400" width="6.800" height="2.600" fill="#7cc24a"/></svg>
<div class="t tabt" id="tab1t" style="left:188.70px;top:64.00px;transform:scaleX(0.8894);transform-origin:0 0;color:#858585;">demo.cpp</div>
<div class="t tabt" id="tab2t" style="left:263.10px;top:64.10px;transform:scaleX(0.8741);transform-origin:0 0;color:#101018;">version.ini</div>
<svg class="abs" style="left:233.10px;top:65.40px" width="8.60" height="8.80" viewBox="0 0 8.600 8.800"><rect width="8.600" height="8.800" fill="#b2b2b2"/><path d="M1.400 1.400l5.800 6M7.200 1.400l-5.800 6" stroke="#fff" stroke-width="1.700"/></svg>
<svg class="abs" style="left:307.90px;top:65.40px" width="8.60" height="8.80" viewBox="0 0 8.600 8.800"><rect width="8.600" height="8.800" fill="#b46464"/><path d="M1.400 1.400l5.800 6M7.200 1.400l-5.800 6" stroke="#fff" stroke-width="1.700"/></svg>
<div class="abs" id="lnm"></div><div class="abs" id="fold"></div><div class="abs" id="hl"></div>
<div class="abs" id="edborder"></div><div class="abs" id="edborder2"></div><div class="abs" id="edleft"></div>
<div class="t mono" id="ln" style="left:192.50px;top:82.80px;">1</div>
<div class="t mono" id="code" style="left:228.10px;top:81.80px;">org.eclipse.core.runtime<span>=</span>1</div>
</body></html>
